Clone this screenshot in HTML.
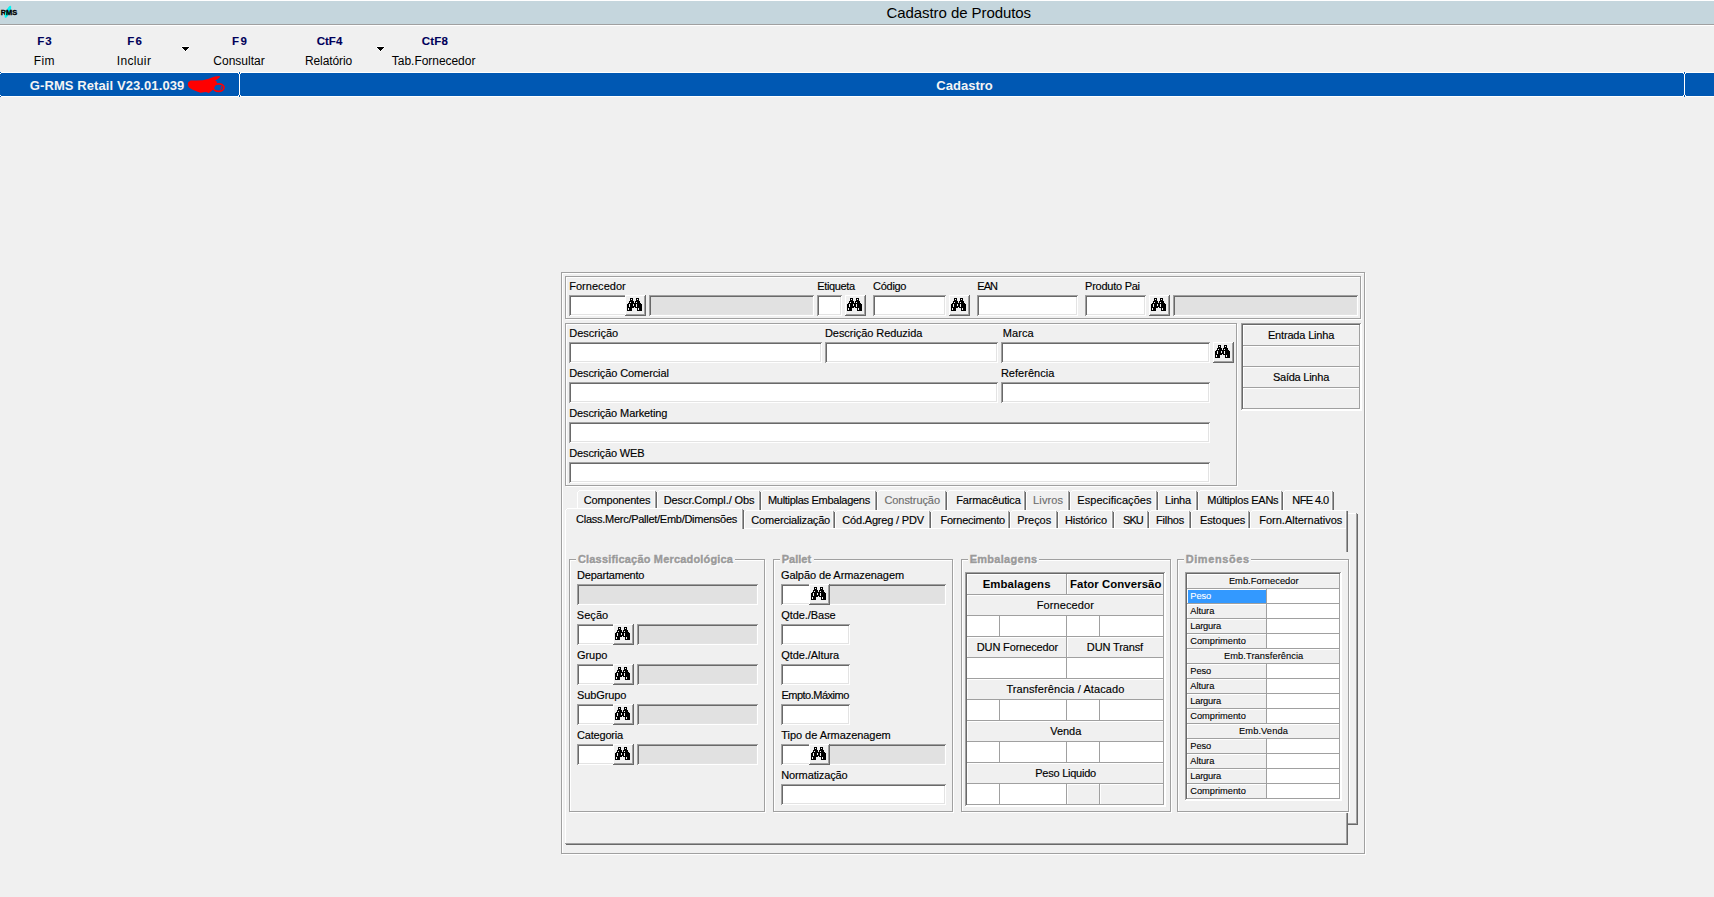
<!DOCTYPE html>
<html lang="pt-BR"><head><meta charset="utf-8"><title>Cadastro de Produtos</title>
<style>
html,body{margin:0;padding:0}
body{width:1714px;height:897px;background:#f0f0f0;position:relative;overflow:hidden;font-family:"Liberation Sans",sans-serif;font-size:11px}
.a{position:absolute;box-sizing:border-box}
.f{background:#fff;box-shadow:inset 0 1px #a0a0a0,inset 1px 0 #a0a0a0,inset -1px 0 #fff,inset 0 -1px #fff,inset 0 2px #696969,inset 2px 0 #696969,inset -2px 0 #e3e3e3,inset 0 -2px #e3e3e3}
.d{background:#e1e1e1}
.b{width:21px;height:21px;background:#f0f0f0;box-shadow:inset -1px 0 #696969,inset 0 -1px #696969,inset 1px 0 #fff,inset 0 1px #fff,inset -2px 0 #a0a0a0,inset 0 -2px #a0a0a0}
.b i{position:absolute;left:2px;top:3px;width:1px;height:1px;box-shadow:3px 0px #000,4px 0px #000,5px 0px #000,9px 0px #000,10px 0px #000,11px 0px #000,3px 1px #000,5px 1px #000,9px 1px #000,11px 1px #000,3px 2px #000,4px 2px #000,5px 2px #000,9px 2px #000,10px 2px #000,11px 2px #000,2px 3px #000,3px 3px #000,4px 3px #000,5px 3px #000,6px 3px #000,8px 3px #000,9px 3px #000,10px 3px #000,11px 3px #000,12px 3px #000,2px 4px #000,4px 4px #000,5px 4px #000,6px 4px #000,8px 4px #000,10px 4px #000,11px 4px #000,12px 4px #000,1px 5px #000,2px 5px #000,3px 5px #000,4px 5px #000,5px 5px #000,6px 5px #000,7px 5px #000,8px 5px #000,9px 5px #000,10px 5px #000,11px 5px #000,12px 5px #000,13px 5px #000,0px 6px #000,1px 6px #000,3px 6px #000,4px 6px #000,5px 6px #000,7px 6px #000,8px 6px #000,10px 6px #000,11px 6px #000,12px 6px #000,13px 6px #000,14px 6px #000,0px 7px #000,1px 7px #000,3px 7px #000,4px 7px #000,5px 7px #000,7px 7px #000,8px 7px #000,10px 7px #000,11px 7px #000,12px 7px #000,13px 7px #000,14px 7px #000,0px 8px #000,1px 8px #000,3px 8px #000,4px 8px #000,5px 8px #000,6px 8px #000,7px 8px #000,8px 8px #000,10px 8px #000,11px 8px #000,12px 8px #000,13px 8px #000,14px 8px #000,0px 9px #000,1px 9px #000,2px 9px #000,3px 9px #000,4px 9px #000,5px 9px #000,6px 9px #000,8px 9px #000,9px 9px #000,10px 9px #000,11px 9px #000,12px 9px #000,13px 9px #000,14px 9px #000,0px 10px #000,2px 10px #000,3px 10px #000,4px 10px #000,10px 10px #000,12px 10px #000,13px 10px #000,14px 10px #000,0px 11px #000,2px 11px #000,3px 11px #000,4px 11px #000,10px 11px #000,12px 11px #000,13px 11px #000,14px 11px #000,0px 12px #000,1px 12px #000,2px 12px #000,3px 12px #000,4px 12px #000,10px 12px #000,11px 12px #000,12px 12px #000,13px 12px #000,14px 12px #000}
.e{border:1px solid #a0a0a0;box-shadow:1px 1px 0 #fff,inset 1px 1px 0 #fff}
svg{position:absolute;left:0;top:0}
text{font-family:"Liberation Sans",sans-serif;font-size:11px;color:#000;fill:currentColor;white-space:pre;stroke:currentColor;stroke-width:.15px}
</style></head>
<body>
<div class="a " style="left:0px;top:0px;width:1714px;height:1px;background:#ffffff"></div>
<div class="a " style="left:0px;top:1px;width:1714px;height:23px;background:#c5d6dd"></div>
<div class="a " style="left:0px;top:24px;width:1714px;height:1px;background:#a0a0a0"></div>
<div class="a " style="left:0px;top:25px;width:1714px;height:1px;background:#ffffff"></div>
<div class="a " style="left:182px;top:46px;width:7px;height:1px;background:#ffffff"></div>
<div class="a " style="left:181px;top:47px;width:1px;height:1px;background:#ffffff"></div>
<div class="a " style="left:189px;top:47px;width:1px;height:1px;background:#ffffff"></div>
<div class="a " style="left:182px;top:47px;width:7px;height:1px;background:#000"></div>
<div class="a " style="left:182px;top:48px;width:1px;height:1px;background:#ffffff"></div>
<div class="a " style="left:188px;top:48px;width:1px;height:1px;background:#ffffff"></div>
<div class="a " style="left:183px;top:48px;width:5px;height:1px;background:#000"></div>
<div class="a " style="left:183px;top:49px;width:1px;height:1px;background:#ffffff"></div>
<div class="a " style="left:187px;top:49px;width:1px;height:1px;background:#ffffff"></div>
<div class="a " style="left:184px;top:49px;width:3px;height:1px;background:#000"></div>
<div class="a " style="left:184px;top:50px;width:1px;height:1px;background:#ffffff"></div>
<div class="a " style="left:186px;top:50px;width:1px;height:1px;background:#ffffff"></div>
<div class="a " style="left:185px;top:50px;width:1px;height:1px;background:#000"></div>
<div class="a " style="left:185px;top:51px;width:1px;height:1px;background:#ffffff"></div>
<div class="a " style="left:377px;top:46px;width:7px;height:1px;background:#ffffff"></div>
<div class="a " style="left:376px;top:47px;width:1px;height:1px;background:#ffffff"></div>
<div class="a " style="left:384px;top:47px;width:1px;height:1px;background:#ffffff"></div>
<div class="a " style="left:377px;top:47px;width:7px;height:1px;background:#000"></div>
<div class="a " style="left:377px;top:48px;width:1px;height:1px;background:#ffffff"></div>
<div class="a " style="left:383px;top:48px;width:1px;height:1px;background:#ffffff"></div>
<div class="a " style="left:378px;top:48px;width:5px;height:1px;background:#000"></div>
<div class="a " style="left:378px;top:49px;width:1px;height:1px;background:#ffffff"></div>
<div class="a " style="left:382px;top:49px;width:1px;height:1px;background:#ffffff"></div>
<div class="a " style="left:379px;top:49px;width:3px;height:1px;background:#000"></div>
<div class="a " style="left:379px;top:50px;width:1px;height:1px;background:#ffffff"></div>
<div class="a " style="left:381px;top:50px;width:1px;height:1px;background:#ffffff"></div>
<div class="a " style="left:380px;top:50px;width:1px;height:1px;background:#000"></div>
<div class="a " style="left:380px;top:51px;width:1px;height:1px;background:#ffffff"></div>
<div class="a " style="left:0px;top:72px;width:1714px;height:1px;background:#ffffff"></div>
<div class="a " style="left:0px;top:73px;width:1714px;height:23px;background:#0058b3"></div>
<div class="a " style="left:0px;top:96px;width:1714px;height:1px;background:#ffffff"></div>
<div class="a " style="left:239px;top:74px;width:1px;height:21px;background:#ffffff"></div>
<div class="a " style="left:238px;top:73px;width:1px;height:1px;background:#ffffff"></div>
<div class="a " style="left:240px;top:73px;width:1px;height:1px;background:#ffffff"></div>
<div class="a " style="left:238px;top:95px;width:1px;height:1px;background:#ffffff"></div>
<div class="a " style="left:240px;top:95px;width:1px;height:1px;background:#ffffff"></div>
<div class="a " style="left:239px;top:72px;width:1px;height:1px;background:#0058b3"></div>
<div class="a " style="left:239px;top:96px;width:1px;height:1px;background:#0058b3"></div>
<div class="a " style="left:1684px;top:74px;width:1px;height:21px;background:#ffffff"></div>
<div class="a " style="left:1683px;top:73px;width:1px;height:1px;background:#ffffff"></div>
<div class="a " style="left:1685px;top:73px;width:1px;height:1px;background:#ffffff"></div>
<div class="a " style="left:1683px;top:95px;width:1px;height:1px;background:#ffffff"></div>
<div class="a " style="left:1685px;top:95px;width:1px;height:1px;background:#ffffff"></div>
<div class="a " style="left:1684px;top:72px;width:1px;height:1px;background:#0058b3"></div>
<div class="a " style="left:1684px;top:96px;width:1px;height:1px;background:#0058b3"></div>
<div class="a " style="left:0px;top:72px;width:1px;height:1px;background:#0058b3"></div>
<div class="a " style="left:0px;top:73px;width:1px;height:1px;background:#ffffff"></div>
<div class="a " style="left:0px;top:95px;width:1px;height:1px;background:#ffffff"></div>
<div class="a " style="left:0px;top:96px;width:1px;height:1px;background:#0058b3"></div>
<div class="a e" style="left:561px;top:272px;width:804px;height:582px;"></div>
<div class="a e" style="left:565px;top:276px;width:796px;height:43px;"></div>
<div class="a e" style="left:565px;top:323px;width:672px;height:163px;"></div>
<div class="a f" style="left:569px;top:295px;width:58px;height:21px;"></div>
<div class="a b" style="left:625px;top:295px"><i></i></div>
<div class="a f d" style="left:649px;top:295px;width:165px;height:21px;"></div>
<div class="a f" style="left:817px;top:295px;width:25px;height:21px;"></div>
<div class="a b" style="left:845px;top:295px"><i></i></div>
<div class="a f" style="left:873px;top:295px;width:73px;height:21px;"></div>
<div class="a b" style="left:949px;top:295px"><i></i></div>
<div class="a f" style="left:977px;top:295px;width:101px;height:21px;"></div>
<div class="a f" style="left:1085px;top:295px;width:61px;height:21px;"></div>
<div class="a b" style="left:1149px;top:295px"><i></i></div>
<div class="a f d" style="left:1173px;top:295px;width:185px;height:21px;"></div>
<div class="a f" style="left:569px;top:342px;width:253px;height:21px;"></div>
<div class="a f" style="left:825px;top:342px;width:173px;height:21px;"></div>
<div class="a f" style="left:1001px;top:342px;width:209px;height:21px;"></div>
<div class="a b" style="left:1213px;top:342px"><i></i></div>
<div class="a f" style="left:569px;top:382px;width:429px;height:21px;"></div>
<div class="a f" style="left:1001px;top:382px;width:209px;height:21px;"></div>
<div class="a f" style="left:569px;top:422px;width:641px;height:21px;"></div>
<div class="a f" style="left:569px;top:462px;width:641px;height:21px;"></div>
<div class="a " style="left:1241px;top:323px;width:1px;height:88px;background:#a0a0a0"></div>
<div class="a " style="left:1242px;top:324px;width:1px;height:86px;background:#696969"></div>
<div class="a " style="left:1241px;top:323px;width:121px;height:1px;background:#a0a0a0"></div>
<div class="a " style="left:1242px;top:324px;width:119px;height:1px;background:#696969"></div>
<div class="a " style="left:1359px;top:325px;width:1px;height:84px;background:#a0a0a0"></div>
<div class="a " style="left:1360px;top:324px;width:2px;height:87px;background:#ffffff"></div>
<div class="a " style="left:1361px;top:323px;width:1px;height:1px;background:#ffffff"></div>
<div class="a " style="left:1243px;top:408px;width:117px;height:1px;background:#a0a0a0"></div>
<div class="a " style="left:1242px;top:409px;width:120px;height:2px;background:#ffffff"></div>
<div class="a " style="left:1241px;top:410px;width:1px;height:1px;background:#ffffff"></div>
<div class="a " style="left:1243px;top:345px;width:116px;height:1px;background:#a0a0a0"></div>
<div class="a " style="left:1243px;top:366px;width:116px;height:1px;background:#a0a0a0"></div>
<div class="a " style="left:1243px;top:387px;width:116px;height:1px;background:#a0a0a0"></div>
<div class="a " style="left:1243px;top:325px;width:116px;height:1px;background:#ffffff"></div>
<div class="a " style="left:1243px;top:325px;width:1px;height:20px;background:#ffffff"></div>
<div class="a " style="left:1243px;top:346px;width:116px;height:1px;background:#ffffff"></div>
<div class="a " style="left:1243px;top:346px;width:1px;height:20px;background:#ffffff"></div>
<div class="a " style="left:1243px;top:367px;width:116px;height:1px;background:#ffffff"></div>
<div class="a " style="left:1243px;top:367px;width:1px;height:20px;background:#ffffff"></div>
<div class="a " style="left:1243px;top:388px;width:116px;height:1px;background:#ffffff"></div>
<div class="a " style="left:1243px;top:388px;width:1px;height:20px;background:#ffffff"></div>
<div class="a " style="left:565px;top:510px;width:1px;height:333px;background:#ffffff"></div>
<div class="a " style="left:565px;top:843px;width:783px;height:1px;background:#a0a0a0"></div>
<div class="a " style="left:566px;top:844px;width:782px;height:1px;background:#696969"></div>
<div class="a " style="left:1346px;top:511px;width:1px;height:333px;background:#a0a0a0"></div>
<div class="a " style="left:1347px;top:511px;width:1px;height:334px;background:#696969"></div>
<div class="a " style="left:744px;top:528px;width:602px;height:1px;background:#ffffff"></div>
<div class="a " style="left:1348px;top:513px;width:8px;height:1px;background:#ffffff"></div>
<div class="a " style="left:1356px;top:513px;width:1px;height:311px;background:#a0a0a0"></div>
<div class="a " style="left:1357px;top:514px;width:1px;height:311px;background:#696969"></div>
<div class="a " style="left:1348px;top:823px;width:9px;height:1px;background:#a0a0a0"></div>
<div class="a " style="left:1348px;top:824px;width:10px;height:1px;background:#696969"></div>
<div class="a " style="left:577px;top:492px;width:1px;height:18px;background:#ffffff"></div>
<div class="a " style="left:578px;top:491px;width:1px;height:1px;background:#ffffff"></div>
<div class="a " style="left:579px;top:490px;width:76px;height:1px;background:#ffffff"></div>
<div class="a " style="left:654px;top:491px;width:1px;height:19px;background:#f9f9f9"></div>
<div class="a " style="left:655px;top:491px;width:1px;height:19px;background:#a0a0a0"></div>
<div class="a " style="left:656px;top:492px;width:1px;height:18px;background:#696969"></div>
<div class="a " style="left:657px;top:492px;width:1px;height:18px;background:#ffffff"></div>
<div class="a " style="left:658px;top:491px;width:1px;height:1px;background:#ffffff"></div>
<div class="a " style="left:659px;top:490px;width:100px;height:1px;background:#ffffff"></div>
<div class="a " style="left:758px;top:491px;width:1px;height:19px;background:#f9f9f9"></div>
<div class="a " style="left:759px;top:491px;width:1px;height:19px;background:#a0a0a0"></div>
<div class="a " style="left:760px;top:492px;width:1px;height:18px;background:#696969"></div>
<div class="a " style="left:761px;top:492px;width:1px;height:18px;background:#ffffff"></div>
<div class="a " style="left:762px;top:491px;width:1px;height:1px;background:#ffffff"></div>
<div class="a " style="left:763px;top:490px;width:112px;height:1px;background:#ffffff"></div>
<div class="a " style="left:874px;top:491px;width:1px;height:19px;background:#f9f9f9"></div>
<div class="a " style="left:875px;top:491px;width:1px;height:19px;background:#a0a0a0"></div>
<div class="a " style="left:876px;top:492px;width:1px;height:18px;background:#696969"></div>
<div class="a " style="left:877px;top:492px;width:1px;height:18px;background:#ffffff"></div>
<div class="a " style="left:878px;top:491px;width:1px;height:1px;background:#ffffff"></div>
<div class="a " style="left:879px;top:490px;width:66px;height:1px;background:#ffffff"></div>
<div class="a " style="left:944px;top:491px;width:1px;height:19px;background:#f9f9f9"></div>
<div class="a " style="left:945px;top:491px;width:1px;height:19px;background:#a0a0a0"></div>
<div class="a " style="left:946px;top:492px;width:1px;height:18px;background:#696969"></div>
<div class="a " style="left:947px;top:492px;width:1px;height:18px;background:#ffffff"></div>
<div class="a " style="left:948px;top:491px;width:1px;height:1px;background:#ffffff"></div>
<div class="a " style="left:949px;top:490px;width:75px;height:1px;background:#ffffff"></div>
<div class="a " style="left:1023px;top:491px;width:1px;height:19px;background:#f9f9f9"></div>
<div class="a " style="left:1024px;top:491px;width:1px;height:19px;background:#a0a0a0"></div>
<div class="a " style="left:1025px;top:492px;width:1px;height:18px;background:#696969"></div>
<div class="a " style="left:1026px;top:492px;width:1px;height:18px;background:#ffffff"></div>
<div class="a " style="left:1027px;top:491px;width:1px;height:1px;background:#ffffff"></div>
<div class="a " style="left:1028px;top:490px;width:40px;height:1px;background:#ffffff"></div>
<div class="a " style="left:1067px;top:491px;width:1px;height:19px;background:#f9f9f9"></div>
<div class="a " style="left:1068px;top:491px;width:1px;height:19px;background:#a0a0a0"></div>
<div class="a " style="left:1069px;top:492px;width:1px;height:18px;background:#696969"></div>
<div class="a " style="left:1070px;top:492px;width:1px;height:18px;background:#ffffff"></div>
<div class="a " style="left:1071px;top:491px;width:1px;height:1px;background:#ffffff"></div>
<div class="a " style="left:1072px;top:490px;width:84px;height:1px;background:#ffffff"></div>
<div class="a " style="left:1155px;top:491px;width:1px;height:19px;background:#f9f9f9"></div>
<div class="a " style="left:1156px;top:491px;width:1px;height:19px;background:#a0a0a0"></div>
<div class="a " style="left:1157px;top:492px;width:1px;height:18px;background:#696969"></div>
<div class="a " style="left:1158px;top:492px;width:1px;height:18px;background:#ffffff"></div>
<div class="a " style="left:1159px;top:491px;width:1px;height:1px;background:#ffffff"></div>
<div class="a " style="left:1160px;top:490px;width:36px;height:1px;background:#ffffff"></div>
<div class="a " style="left:1195px;top:491px;width:1px;height:19px;background:#f9f9f9"></div>
<div class="a " style="left:1196px;top:491px;width:1px;height:19px;background:#a0a0a0"></div>
<div class="a " style="left:1197px;top:492px;width:1px;height:18px;background:#696969"></div>
<div class="a " style="left:1198px;top:492px;width:1px;height:18px;background:#ffffff"></div>
<div class="a " style="left:1199px;top:491px;width:1px;height:1px;background:#ffffff"></div>
<div class="a " style="left:1200px;top:490px;width:81px;height:1px;background:#ffffff"></div>
<div class="a " style="left:1280px;top:491px;width:1px;height:19px;background:#f9f9f9"></div>
<div class="a " style="left:1281px;top:491px;width:1px;height:19px;background:#a0a0a0"></div>
<div class="a " style="left:1282px;top:492px;width:1px;height:18px;background:#696969"></div>
<div class="a " style="left:1283px;top:492px;width:1px;height:18px;background:#ffffff"></div>
<div class="a " style="left:1284px;top:491px;width:1px;height:1px;background:#ffffff"></div>
<div class="a " style="left:1285px;top:490px;width:47px;height:1px;background:#ffffff"></div>
<div class="a " style="left:1331px;top:491px;width:1px;height:19px;background:#f9f9f9"></div>
<div class="a " style="left:1332px;top:491px;width:1px;height:19px;background:#a0a0a0"></div>
<div class="a " style="left:1333px;top:492px;width:1px;height:18px;background:#696969"></div>
<div class="a " style="left:744px;top:512px;width:1px;height:16px;background:#ffffff"></div>
<div class="a " style="left:745px;top:511px;width:1px;height:1px;background:#ffffff"></div>
<div class="a " style="left:746px;top:510px;width:87px;height:1px;background:#ffffff"></div>
<div class="a " style="left:832px;top:511px;width:1px;height:17px;background:#f9f9f9"></div>
<div class="a " style="left:833px;top:511px;width:1px;height:17px;background:#a0a0a0"></div>
<div class="a " style="left:834px;top:512px;width:1px;height:16px;background:#696969"></div>
<div class="a " style="left:835px;top:512px;width:1px;height:16px;background:#ffffff"></div>
<div class="a " style="left:836px;top:511px;width:1px;height:1px;background:#ffffff"></div>
<div class="a " style="left:837px;top:510px;width:92px;height:1px;background:#ffffff"></div>
<div class="a " style="left:928px;top:511px;width:1px;height:17px;background:#f9f9f9"></div>
<div class="a " style="left:929px;top:511px;width:1px;height:17px;background:#a0a0a0"></div>
<div class="a " style="left:930px;top:512px;width:1px;height:16px;background:#696969"></div>
<div class="a " style="left:931px;top:512px;width:1px;height:16px;background:#ffffff"></div>
<div class="a " style="left:932px;top:511px;width:1px;height:1px;background:#ffffff"></div>
<div class="a " style="left:933px;top:510px;width:75px;height:1px;background:#ffffff"></div>
<div class="a " style="left:1007px;top:511px;width:1px;height:17px;background:#f9f9f9"></div>
<div class="a " style="left:1008px;top:511px;width:1px;height:17px;background:#a0a0a0"></div>
<div class="a " style="left:1009px;top:512px;width:1px;height:16px;background:#696969"></div>
<div class="a " style="left:1010px;top:512px;width:1px;height:16px;background:#ffffff"></div>
<div class="a " style="left:1011px;top:511px;width:1px;height:1px;background:#ffffff"></div>
<div class="a " style="left:1012px;top:510px;width:44px;height:1px;background:#ffffff"></div>
<div class="a " style="left:1055px;top:511px;width:1px;height:17px;background:#f9f9f9"></div>
<div class="a " style="left:1056px;top:511px;width:1px;height:17px;background:#a0a0a0"></div>
<div class="a " style="left:1057px;top:512px;width:1px;height:16px;background:#696969"></div>
<div class="a " style="left:1058px;top:512px;width:1px;height:16px;background:#ffffff"></div>
<div class="a " style="left:1059px;top:511px;width:1px;height:1px;background:#ffffff"></div>
<div class="a " style="left:1060px;top:510px;width:52px;height:1px;background:#ffffff"></div>
<div class="a " style="left:1111px;top:511px;width:1px;height:17px;background:#f9f9f9"></div>
<div class="a " style="left:1112px;top:511px;width:1px;height:17px;background:#a0a0a0"></div>
<div class="a " style="left:1113px;top:512px;width:1px;height:16px;background:#696969"></div>
<div class="a " style="left:1114px;top:512px;width:1px;height:16px;background:#ffffff"></div>
<div class="a " style="left:1115px;top:511px;width:1px;height:1px;background:#ffffff"></div>
<div class="a " style="left:1116px;top:510px;width:31px;height:1px;background:#ffffff"></div>
<div class="a " style="left:1146px;top:511px;width:1px;height:17px;background:#f9f9f9"></div>
<div class="a " style="left:1147px;top:511px;width:1px;height:17px;background:#a0a0a0"></div>
<div class="a " style="left:1148px;top:512px;width:1px;height:16px;background:#696969"></div>
<div class="a " style="left:1149px;top:512px;width:1px;height:16px;background:#ffffff"></div>
<div class="a " style="left:1150px;top:511px;width:1px;height:1px;background:#ffffff"></div>
<div class="a " style="left:1151px;top:510px;width:38px;height:1px;background:#ffffff"></div>
<div class="a " style="left:1188px;top:511px;width:1px;height:17px;background:#f9f9f9"></div>
<div class="a " style="left:1189px;top:511px;width:1px;height:17px;background:#a0a0a0"></div>
<div class="a " style="left:1190px;top:512px;width:1px;height:16px;background:#696969"></div>
<div class="a " style="left:1191px;top:512px;width:1px;height:16px;background:#ffffff"></div>
<div class="a " style="left:1192px;top:511px;width:1px;height:1px;background:#ffffff"></div>
<div class="a " style="left:1193px;top:510px;width:55px;height:1px;background:#ffffff"></div>
<div class="a " style="left:1247px;top:511px;width:1px;height:17px;background:#f9f9f9"></div>
<div class="a " style="left:1248px;top:511px;width:1px;height:17px;background:#a0a0a0"></div>
<div class="a " style="left:1249px;top:512px;width:1px;height:16px;background:#696969"></div>
<div class="a " style="left:1250px;top:512px;width:1px;height:16px;background:#ffffff"></div>
<div class="a " style="left:1251px;top:511px;width:1px;height:1px;background:#ffffff"></div>
<div class="a " style="left:1252px;top:510px;width:94px;height:1px;background:#ffffff"></div>
<div class="a " style="left:1345px;top:511px;width:1px;height:17px;background:#f9f9f9"></div>
<div class="a " style="left:1346px;top:511px;width:1px;height:17px;background:#a0a0a0"></div>
<div class="a " style="left:1347px;top:512px;width:1px;height:16px;background:#696969"></div>
<div class="a " style="left:565px;top:508px;width:179px;height:21px;background:#f0f0f0"></div>
<div class="a " style="left:565px;top:510px;width:1px;height:19px;background:#ffffff"></div>
<div class="a " style="left:566px;top:509px;width:1px;height:1px;background:#ffffff"></div>
<div class="a " style="left:567px;top:508px;width:175px;height:1px;background:#ffffff"></div>
<div class="a " style="left:741px;top:509px;width:1px;height:20px;background:#f9f9f9"></div>
<div class="a " style="left:742px;top:509px;width:1px;height:20px;background:#a0a0a0"></div>
<div class="a " style="left:743px;top:510px;width:1px;height:19px;background:#696969"></div>
<div class="a " style="left:565px;top:511px;width:1px;height:332px;background:#ffffff"></div>
<div class="a " style="left:569px;top:552px;width:197px;height:261px;background:#f0f0f0"></div>
<div class="a e" style="left:569px;top:559px;width:196px;height:253px;"></div>
<div class="a " style="left:576px;top:555px;width:159px;height:10px;background:#f0f0f0"></div>
<div class="a " style="left:773px;top:552px;width:181px;height:261px;background:#f0f0f0"></div>
<div class="a e" style="left:773px;top:559px;width:180px;height:253px;"></div>
<div class="a " style="left:780px;top:555px;width:34px;height:10px;background:#f0f0f0"></div>
<div class="a " style="left:961px;top:552px;width:211px;height:261px;background:#f0f0f0"></div>
<div class="a e" style="left:961px;top:559px;width:210px;height:253px;"></div>
<div class="a " style="left:968px;top:555px;width:71px;height:10px;background:#f0f0f0"></div>
<div class="a " style="left:1177px;top:552px;width:173px;height:261px;background:#f0f0f0"></div>
<div class="a e" style="left:1177px;top:559px;width:172px;height:253px;"></div>
<div class="a " style="left:1184px;top:555px;width:67px;height:10px;background:#f0f0f0"></div>
<div class="a f d" style="left:577px;top:584px;width:181px;height:21px;"></div>
<div class="a f" style="left:577px;top:624px;width:38px;height:21px;"></div>
<div class="a b" style="left:613px;top:624px"><i></i></div>
<div class="a f d" style="left:637px;top:624px;width:121px;height:21px;"></div>
<div class="a f" style="left:577px;top:664px;width:38px;height:21px;"></div>
<div class="a b" style="left:613px;top:664px"><i></i></div>
<div class="a f d" style="left:637px;top:664px;width:121px;height:21px;"></div>
<div class="a f" style="left:577px;top:704px;width:38px;height:21px;"></div>
<div class="a b" style="left:613px;top:704px"><i></i></div>
<div class="a f d" style="left:637px;top:704px;width:121px;height:21px;"></div>
<div class="a f" style="left:577px;top:744px;width:38px;height:21px;"></div>
<div class="a b" style="left:613px;top:744px"><i></i></div>
<div class="a f d" style="left:637px;top:744px;width:121px;height:21px;"></div>
<div class="a f" style="left:781px;top:584px;width:30px;height:21px;"></div>
<div class="a f d" style="left:828px;top:584px;width:118px;height:21px;"></div>
<div class="a b" style="left:809px;top:584px"><i></i></div>
<div class="a f" style="left:781px;top:624px;width:69px;height:21px;"></div>
<div class="a f" style="left:781px;top:664px;width:69px;height:21px;"></div>
<div class="a f" style="left:781px;top:704px;width:69px;height:21px;"></div>
<div class="a f" style="left:781px;top:744px;width:30px;height:21px;"></div>
<div class="a f d" style="left:828px;top:744px;width:118px;height:21px;"></div>
<div class="a b" style="left:809px;top:744px"><i></i></div>
<div class="a f" style="left:781px;top:784px;width:165px;height:21px;"></div>
<div class="a " style="left:967px;top:574px;width:196px;height:230px;background:#ffffff"></div>
<div class="a " style="left:965px;top:572px;width:1px;height:235px;background:#a0a0a0"></div>
<div class="a " style="left:966px;top:573px;width:1px;height:233px;background:#696969"></div>
<div class="a " style="left:965px;top:572px;width:201px;height:1px;background:#a0a0a0"></div>
<div class="a " style="left:966px;top:573px;width:199px;height:1px;background:#696969"></div>
<div class="a " style="left:1163px;top:574px;width:1px;height:231px;background:#a0a0a0"></div>
<div class="a " style="left:1164px;top:573px;width:2px;height:234px;background:#ffffff"></div>
<div class="a " style="left:1165px;top:572px;width:1px;height:1px;background:#ffffff"></div>
<div class="a " style="left:967px;top:804px;width:197px;height:1px;background:#a0a0a0"></div>
<div class="a " style="left:966px;top:805px;width:200px;height:2px;background:#ffffff"></div>
<div class="a " style="left:965px;top:806px;width:1px;height:1px;background:#ffffff"></div>
<div class="a " style="left:967px;top:574px;width:196px;height:20px;background:#f0f0f0"></div>
<div class="a " style="left:967px;top:574px;width:99px;height:1px;background:#ffffff"></div>
<div class="a " style="left:967px;top:574px;width:1px;height:20px;background:#ffffff"></div>
<div class="a " style="left:1067px;top:574px;width:96px;height:1px;background:#ffffff"></div>
<div class="a " style="left:1067px;top:574px;width:1px;height:20px;background:#ffffff"></div>
<div class="a " style="left:1066px;top:574px;width:1px;height:20px;background:#a0a0a0"></div>
<div class="a " style="left:967px;top:594px;width:196px;height:1px;background:#a0a0a0"></div>
<div class="a " style="left:967px;top:595px;width:196px;height:20px;background:#f0f0f0"></div>
<div class="a " style="left:967px;top:595px;width:196px;height:1px;background:#ffffff"></div>
<div class="a " style="left:967px;top:595px;width:1px;height:20px;background:#ffffff"></div>
<div class="a " style="left:967px;top:615px;width:196px;height:1px;background:#a0a0a0"></div>
<div class="a " style="left:999px;top:616px;width:1px;height:20px;background:#a0a0a0"></div>
<div class="a " style="left:1066px;top:616px;width:1px;height:20px;background:#a0a0a0"></div>
<div class="a " style="left:1099px;top:616px;width:1px;height:20px;background:#a0a0a0"></div>
<div class="a " style="left:967px;top:636px;width:196px;height:1px;background:#a0a0a0"></div>
<div class="a " style="left:967px;top:637px;width:196px;height:20px;background:#f0f0f0"></div>
<div class="a " style="left:967px;top:637px;width:99px;height:1px;background:#ffffff"></div>
<div class="a " style="left:967px;top:637px;width:1px;height:20px;background:#ffffff"></div>
<div class="a " style="left:1067px;top:637px;width:96px;height:1px;background:#ffffff"></div>
<div class="a " style="left:1067px;top:637px;width:1px;height:20px;background:#ffffff"></div>
<div class="a " style="left:1066px;top:637px;width:1px;height:20px;background:#a0a0a0"></div>
<div class="a " style="left:967px;top:657px;width:196px;height:1px;background:#a0a0a0"></div>
<div class="a " style="left:1066px;top:658px;width:1px;height:20px;background:#a0a0a0"></div>
<div class="a " style="left:967px;top:678px;width:196px;height:1px;background:#a0a0a0"></div>
<div class="a " style="left:967px;top:679px;width:196px;height:20px;background:#f0f0f0"></div>
<div class="a " style="left:967px;top:679px;width:196px;height:1px;background:#ffffff"></div>
<div class="a " style="left:967px;top:679px;width:1px;height:20px;background:#ffffff"></div>
<div class="a " style="left:967px;top:699px;width:196px;height:1px;background:#a0a0a0"></div>
<div class="a " style="left:999px;top:700px;width:1px;height:20px;background:#a0a0a0"></div>
<div class="a " style="left:1066px;top:700px;width:1px;height:20px;background:#a0a0a0"></div>
<div class="a " style="left:1099px;top:700px;width:1px;height:20px;background:#a0a0a0"></div>
<div class="a " style="left:967px;top:720px;width:196px;height:1px;background:#a0a0a0"></div>
<div class="a " style="left:967px;top:721px;width:196px;height:20px;background:#f0f0f0"></div>
<div class="a " style="left:967px;top:721px;width:196px;height:1px;background:#ffffff"></div>
<div class="a " style="left:967px;top:721px;width:1px;height:20px;background:#ffffff"></div>
<div class="a " style="left:967px;top:741px;width:196px;height:1px;background:#a0a0a0"></div>
<div class="a " style="left:999px;top:742px;width:1px;height:20px;background:#a0a0a0"></div>
<div class="a " style="left:1066px;top:742px;width:1px;height:20px;background:#a0a0a0"></div>
<div class="a " style="left:1099px;top:742px;width:1px;height:20px;background:#a0a0a0"></div>
<div class="a " style="left:967px;top:762px;width:196px;height:1px;background:#a0a0a0"></div>
<div class="a " style="left:967px;top:763px;width:196px;height:20px;background:#f0f0f0"></div>
<div class="a " style="left:967px;top:763px;width:196px;height:1px;background:#ffffff"></div>
<div class="a " style="left:967px;top:763px;width:1px;height:20px;background:#ffffff"></div>
<div class="a " style="left:967px;top:783px;width:196px;height:1px;background:#a0a0a0"></div>
<div class="a " style="left:1067px;top:784px;width:96px;height:20px;background:#f0f0f0"></div>
<div class="a " style="left:1067px;top:784px;width:32px;height:1px;background:#ffffff"></div>
<div class="a " style="left:1067px;top:784px;width:1px;height:20px;background:#ffffff"></div>
<div class="a " style="left:1100px;top:784px;width:63px;height:1px;background:#ffffff"></div>
<div class="a " style="left:1100px;top:784px;width:1px;height:20px;background:#ffffff"></div>
<div class="a " style="left:999px;top:784px;width:1px;height:20px;background:#a0a0a0"></div>
<div class="a " style="left:1066px;top:784px;width:1px;height:20px;background:#a0a0a0"></div>
<div class="a " style="left:1099px;top:784px;width:1px;height:20px;background:#a0a0a0"></div>
<div class="a " style="left:1187px;top:574px;width:152px;height:224px;background:#ffffff"></div>
<div class="a " style="left:1185px;top:572px;width:1px;height:229px;background:#a0a0a0"></div>
<div class="a " style="left:1186px;top:573px;width:1px;height:227px;background:#696969"></div>
<div class="a " style="left:1185px;top:572px;width:157px;height:1px;background:#a0a0a0"></div>
<div class="a " style="left:1186px;top:573px;width:155px;height:1px;background:#696969"></div>
<div class="a " style="left:1339px;top:574px;width:1px;height:225px;background:#a0a0a0"></div>
<div class="a " style="left:1340px;top:573px;width:2px;height:228px;background:#ffffff"></div>
<div class="a " style="left:1341px;top:572px;width:1px;height:1px;background:#ffffff"></div>
<div class="a " style="left:1187px;top:798px;width:153px;height:1px;background:#a0a0a0"></div>
<div class="a " style="left:1186px;top:799px;width:156px;height:2px;background:#ffffff"></div>
<div class="a " style="left:1185px;top:800px;width:1px;height:1px;background:#ffffff"></div>
<div class="a " style="left:1187px;top:574px;width:152px;height:14px;background:#f0f0f0"></div>
<div class="a " style="left:1187px;top:574px;width:152px;height:1px;background:#ffffff"></div>
<div class="a " style="left:1187px;top:574px;width:1px;height:14px;background:#ffffff"></div>
<div class="a " style="left:1187px;top:588px;width:152px;height:1px;background:#a0a0a0"></div>
<div class="a " style="left:1187px;top:589px;width:79px;height:14px;background:#ffffff"></div>
<div class="a " style="left:1188px;top:590px;width:78px;height:13px;background:#3399ff"></div>
<div class="a " style="left:1266px;top:589px;width:1px;height:14px;background:#a0a0a0"></div>
<div class="a " style="left:1187px;top:603px;width:152px;height:1px;background:#a0a0a0"></div>
<div class="a " style="left:1187px;top:604px;width:79px;height:14px;background:#f0f0f0"></div>
<div class="a " style="left:1187px;top:604px;width:79px;height:1px;background:#ffffff"></div>
<div class="a " style="left:1187px;top:604px;width:1px;height:14px;background:#ffffff"></div>
<div class="a " style="left:1266px;top:604px;width:1px;height:14px;background:#a0a0a0"></div>
<div class="a " style="left:1187px;top:618px;width:152px;height:1px;background:#a0a0a0"></div>
<div class="a " style="left:1187px;top:619px;width:79px;height:14px;background:#f0f0f0"></div>
<div class="a " style="left:1187px;top:619px;width:79px;height:1px;background:#ffffff"></div>
<div class="a " style="left:1187px;top:619px;width:1px;height:14px;background:#ffffff"></div>
<div class="a " style="left:1266px;top:619px;width:1px;height:14px;background:#a0a0a0"></div>
<div class="a " style="left:1187px;top:633px;width:152px;height:1px;background:#a0a0a0"></div>
<div class="a " style="left:1187px;top:634px;width:79px;height:14px;background:#f0f0f0"></div>
<div class="a " style="left:1187px;top:634px;width:79px;height:1px;background:#ffffff"></div>
<div class="a " style="left:1187px;top:634px;width:1px;height:14px;background:#ffffff"></div>
<div class="a " style="left:1266px;top:634px;width:1px;height:14px;background:#a0a0a0"></div>
<div class="a " style="left:1187px;top:648px;width:152px;height:1px;background:#a0a0a0"></div>
<div class="a " style="left:1187px;top:649px;width:152px;height:14px;background:#f0f0f0"></div>
<div class="a " style="left:1187px;top:649px;width:152px;height:1px;background:#ffffff"></div>
<div class="a " style="left:1187px;top:649px;width:1px;height:14px;background:#ffffff"></div>
<div class="a " style="left:1187px;top:663px;width:152px;height:1px;background:#a0a0a0"></div>
<div class="a " style="left:1187px;top:664px;width:79px;height:14px;background:#f0f0f0"></div>
<div class="a " style="left:1187px;top:664px;width:79px;height:1px;background:#ffffff"></div>
<div class="a " style="left:1187px;top:664px;width:1px;height:14px;background:#ffffff"></div>
<div class="a " style="left:1266px;top:664px;width:1px;height:14px;background:#a0a0a0"></div>
<div class="a " style="left:1187px;top:678px;width:152px;height:1px;background:#a0a0a0"></div>
<div class="a " style="left:1187px;top:679px;width:79px;height:14px;background:#f0f0f0"></div>
<div class="a " style="left:1187px;top:679px;width:79px;height:1px;background:#ffffff"></div>
<div class="a " style="left:1187px;top:679px;width:1px;height:14px;background:#ffffff"></div>
<div class="a " style="left:1266px;top:679px;width:1px;height:14px;background:#a0a0a0"></div>
<div class="a " style="left:1187px;top:693px;width:152px;height:1px;background:#a0a0a0"></div>
<div class="a " style="left:1187px;top:694px;width:79px;height:14px;background:#f0f0f0"></div>
<div class="a " style="left:1187px;top:694px;width:79px;height:1px;background:#ffffff"></div>
<div class="a " style="left:1187px;top:694px;width:1px;height:14px;background:#ffffff"></div>
<div class="a " style="left:1266px;top:694px;width:1px;height:14px;background:#a0a0a0"></div>
<div class="a " style="left:1187px;top:708px;width:152px;height:1px;background:#a0a0a0"></div>
<div class="a " style="left:1187px;top:709px;width:79px;height:14px;background:#f0f0f0"></div>
<div class="a " style="left:1187px;top:709px;width:79px;height:1px;background:#ffffff"></div>
<div class="a " style="left:1187px;top:709px;width:1px;height:14px;background:#ffffff"></div>
<div class="a " style="left:1266px;top:709px;width:1px;height:14px;background:#a0a0a0"></div>
<div class="a " style="left:1187px;top:723px;width:152px;height:1px;background:#a0a0a0"></div>
<div class="a " style="left:1187px;top:724px;width:152px;height:14px;background:#f0f0f0"></div>
<div class="a " style="left:1187px;top:724px;width:152px;height:1px;background:#ffffff"></div>
<div class="a " style="left:1187px;top:724px;width:1px;height:14px;background:#ffffff"></div>
<div class="a " style="left:1187px;top:738px;width:152px;height:1px;background:#a0a0a0"></div>
<div class="a " style="left:1187px;top:739px;width:79px;height:14px;background:#f0f0f0"></div>
<div class="a " style="left:1187px;top:739px;width:79px;height:1px;background:#ffffff"></div>
<div class="a " style="left:1187px;top:739px;width:1px;height:14px;background:#ffffff"></div>
<div class="a " style="left:1266px;top:739px;width:1px;height:14px;background:#a0a0a0"></div>
<div class="a " style="left:1187px;top:753px;width:152px;height:1px;background:#a0a0a0"></div>
<div class="a " style="left:1187px;top:754px;width:79px;height:14px;background:#f0f0f0"></div>
<div class="a " style="left:1187px;top:754px;width:79px;height:1px;background:#ffffff"></div>
<div class="a " style="left:1187px;top:754px;width:1px;height:14px;background:#ffffff"></div>
<div class="a " style="left:1266px;top:754px;width:1px;height:14px;background:#a0a0a0"></div>
<div class="a " style="left:1187px;top:768px;width:152px;height:1px;background:#a0a0a0"></div>
<div class="a " style="left:1187px;top:769px;width:79px;height:14px;background:#f0f0f0"></div>
<div class="a " style="left:1187px;top:769px;width:79px;height:1px;background:#ffffff"></div>
<div class="a " style="left:1187px;top:769px;width:1px;height:14px;background:#ffffff"></div>
<div class="a " style="left:1266px;top:769px;width:1px;height:14px;background:#a0a0a0"></div>
<div class="a " style="left:1187px;top:783px;width:152px;height:1px;background:#a0a0a0"></div>
<div class="a " style="left:1187px;top:784px;width:79px;height:14px;background:#f0f0f0"></div>
<div class="a " style="left:1187px;top:784px;width:79px;height:1px;background:#ffffff"></div>
<div class="a " style="left:1187px;top:784px;width:1px;height:14px;background:#ffffff"></div>
<div class="a " style="left:1266px;top:784px;width:1px;height:14px;background:#a0a0a0"></div>
<svg width="1714" height="897" viewBox="0 0 1714 897">

<text x="0.8" y="15" style="font-size:7px;font-weight:bold;stroke-width:.35px" textLength="5.3" lengthAdjust="spacingAndGlyphs">R</text>
<ellipse cx="7.9" cy="11.8" rx="2.0" ry="6.6" transform="rotate(25 7.9 11.8)" fill="#00f4f4"/>
<text x="6.1" y="15" style="font-size:7px;font-weight:bold;stroke-width:.35px" textLength="11.1" lengthAdjust="spacingAndGlyphs">MS</text>
<path d="M188.2 82.2 L190.6 80.6 L196.3 80.4 L202.9 80.2 L208.6 78.8 L214.7 76.5 L219.2 75.9 L220.2 77.1 L218 78.8 L215.1 80.8 L217 81.8 L216.7 83.5 L215.1 85.5 L213.5 89.2 L210.2 92 L208.6 93.1 L206.1 92 L200.4 92.7 L196.3 91.2 L192.2 89.6 L189 87.6 L187.8 85.1 Z" fill="#ff0000"/>
<ellipse cx="218.6" cy="87.6" rx="5.4" ry="3.8" fill="none" stroke="#ff0000" stroke-width="1.7"/>
<path d="M221.6 86.2 Q222 88.3 220.5 89.6" fill="none" stroke="#ff0000" stroke-width="1"/>

<text x="886.54" y="18" style="font-size:15px;color:#000;stroke-width:0px;letter-spacing:-0.074px">Cadastro de Produtos</text>
<text x="37.29" y="45" style="font-size:11.5px;font-weight:bold;color:#00005a;stroke-width:0.1px;letter-spacing:1.060px">F3</text>
<text x="33.80" y="65" style="font-size:12px;stroke-width:0px;letter-spacing:0.366px">Fim</text>
<text x="127.33" y="45" style="font-size:11.5px;font-weight:bold;color:#00005a;stroke-width:0.1px;letter-spacing:1.162px">F6</text>
<text x="116.80" y="65" style="font-size:12px;stroke-width:0px;letter-spacing:0.346px">Incluir</text>
<text x="232.06" y="45" style="font-size:11.5px;font-weight:bold;color:#00005a;stroke-width:0.1px;letter-spacing:1.545px">F9</text>
<text x="213.34" y="65" style="font-size:12px;stroke-width:0px">Consultar</text>
<text x="316.68" y="45" style="font-size:11.5px;font-weight:bold;color:#00005a;stroke-width:0.1px;letter-spacing:0.022px">CtF4</text>
<text x="304.96" y="65" style="font-size:12px;stroke-width:0px;letter-spacing:-0.091px">Relatório</text>
<text x="421.85" y="45" style="font-size:11.5px;font-weight:bold;color:#00005a;stroke-width:0.1px;letter-spacing:0.133px">CtF8</text>
<text x="391.87" y="65" style="font-size:12px;stroke-width:0px;letter-spacing:-0.041px">Tab.Fornecedor</text>
<text x="29.87" y="90" style="font-size:13px;font-weight:bold;color:#f4f4f4;stroke-width:0px;letter-spacing:0.088px">G-RMS Retail V23.01.039</text>
<text x="936.32" y="90" style="font-size:13px;font-weight:bold;color:#f4f4f4;stroke-width:0px;letter-spacing:0.019px">Cadastro</text>
<text x="569.18" y="290" style="letter-spacing:0.040px">Fornecedor</text>
<text x="817.23" y="290" style="letter-spacing:-0.341px">Etiqueta</text>
<text x="873.11" y="290" style="letter-spacing:-0.296px">Código</text>
<text x="977.31" y="290" style="letter-spacing:-0.981px">EAN</text>
<text x="1085.06" y="290" style="letter-spacing:-0.248px">Produto Pai</text>
<text x="569.21" y="337" style="letter-spacing:0.008px">Descrição</text>
<text x="824.97" y="337" style="letter-spacing:-0.062px">Descrição Reduzida</text>
<text x="1002.70" y="337" style="letter-spacing:0.085px">Marca</text>
<text x="569.18" y="377" style="letter-spacing:-0.095px">Descrição Comercial</text>
<text x="1000.92" y="377" style="letter-spacing:0.022px">Referência</text>
<text x="569.24" y="417" style="letter-spacing:-0.112px">Descrição Marketing</text>
<text x="569.24" y="457" style="letter-spacing:-0.139px">Descrição WEB</text>
<text x="1267.95" y="339" style="letter-spacing:-0.174px">Entrada Linha</text>
<text x="1272.91" y="381" style="letter-spacing:-0.237px">Saída Linha</text>
<text x="583.82" y="504" style="letter-spacing:-0.188px">Componentes</text>
<text x="663.75" y="504" style="letter-spacing:-0.095px">Descr.Compl./ Obs</text>
<text x="767.95" y="504" style="letter-spacing:-0.285px">Multiplas Embalagens</text>
<text x="884.43" y="504" style="color:#6d6d6d;letter-spacing:-0.072px">Construção</text>
<text x="956.20" y="504" style="letter-spacing:-0.185px">Farmacêutica</text>
<text x="1033.08" y="504" style="color:#6d6d6d;letter-spacing:0.137px">Livros</text>
<text x="1077.23" y="504" style="letter-spacing:0.072px">Especificações</text>
<text x="1164.97" y="504" style="letter-spacing:-0.176px">Linha</text>
<text x="1207.24" y="504" style="letter-spacing:-0.247px">Múltiplos EANs</text>
<text x="1292.28" y="504" style="letter-spacing:-0.565px">NFE 4.0</text>
<text x="751.29" y="524" style="letter-spacing:-0.168px">Comercialização</text>
<text x="842.37" y="524" style="letter-spacing:-0.197px">Cód.Agreg / PDV</text>
<text x="940.43" y="524" style="letter-spacing:-0.223px">Fornecimento</text>
<text x="1017.24" y="524" style="letter-spacing:-0.066px">Preços</text>
<text x="1064.92" y="524" style="letter-spacing:-0.078px">Histórico</text>
<text x="1122.94" y="524" style="letter-spacing:-0.886px">SKU</text>
<text x="1155.97" y="524" style="letter-spacing:-0.209px">Filhos</text>
<text x="1199.90" y="524" style="letter-spacing:-0.068px">Estoques</text>
<text x="1259.22" y="524">Forn.Alternativos</text>
<text x="576.10" y="523" style="letter-spacing:-0.272px">Class.Merc/Pallet/Emb/Dimensões</text>
<text x="578.98" y="564" style="font-weight:bold;color:#fff;stroke-width:0.4px;letter-spacing:0.178px">Classificação Mercadológica</text>
<text x="577.98" y="563" style="font-weight:bold;color:#9a9a9a;stroke-width:0.4px;letter-spacing:0.178px">Classificação Mercadológica</text>
<text x="782.71" y="564" style="font-weight:bold;color:#fff;stroke-width:0.4px;letter-spacing:0.021px">Pallet</text>
<text x="781.71" y="563" style="font-weight:bold;color:#9a9a9a;stroke-width:0.4px;letter-spacing:0.021px">Pallet</text>
<text x="970.64" y="564" style="font-weight:bold;color:#fff;stroke-width:0.4px;letter-spacing:0.297px">Embalagens</text>
<text x="969.64" y="563" style="font-weight:bold;color:#9a9a9a;stroke-width:0.4px;letter-spacing:0.297px">Embalagens</text>
<text x="1186.68" y="564" style="font-weight:bold;color:#fff;stroke-width:0.4px;letter-spacing:0.579px">Dimensões</text>
<text x="1185.68" y="563" style="font-weight:bold;color:#9a9a9a;stroke-width:0.4px;letter-spacing:0.579px">Dimensões</text>
<text x="576.97" y="579" style="letter-spacing:-0.200px">Departamento</text>
<text x="576.84" y="619" style="letter-spacing:0.031px">Seção</text>
<text x="577.00" y="659" style="letter-spacing:-0.050px">Grupo</text>
<text x="577.01" y="699" style="letter-spacing:-0.122px">SubGrupo</text>
<text x="577.12" y="739" style="letter-spacing:-0.208px">Categoria</text>
<text x="780.98" y="579" style="letter-spacing:-0.081px">Galpão de Armazenagem</text>
<text x="781.29" y="619" style="letter-spacing:-0.070px">Qtde./Base</text>
<text x="781.30" y="659" style="letter-spacing:-0.069px">Qtde./Altura</text>
<text x="781.38" y="699" style="letter-spacing:-0.497px">Empto.Máximo</text>
<text x="781.35" y="739" style="letter-spacing:-0.055px">Tipo de Armazenagem</text>
<text x="781.27" y="779" style="letter-spacing:-0.129px">Normatização</text>
<text x="982.63" y="588" style="font-size:11.4px;font-weight:bold;stroke-width:0px;letter-spacing:0.082px">Embalagens</text>
<text x="1069.99" y="588" style="font-size:11.4px;font-weight:bold;stroke-width:0px;letter-spacing:0.065px">Fator Conversão</text>
<text x="1036.79" y="609" style="letter-spacing:0.085px">Fornecedor</text>
<text x="976.78" y="651" style="letter-spacing:-0.138px">DUN Fornecedor</text>
<text x="1086.86" y="651" style="letter-spacing:-0.127px">DUN Transf</text>
<text x="1006.40" y="693" style="letter-spacing:0.100px">Transferência / Atacado</text>
<text x="1050.20" y="735" style="letter-spacing:-0.023px">Venda</text>
<text x="1035.25" y="777" style="letter-spacing:-0.244px">Peso Liquido</text>
<text x="1228.89" y="584" style="font-size:9.3px;stroke-width:0.1px;letter-spacing:0.040px">Emb.Fornecedor</text>
<text x="1190.25" y="599" style="font-size:9.3px;color:#fff;stroke-width:0.1px;letter-spacing:-0.063px">Peso</text>
<text x="1190.37" y="614" style="font-size:9.3px;stroke-width:0.1px;letter-spacing:-0.066px">Altura</text>
<text x="1190.14" y="629" style="font-size:9.3px;stroke-width:0.1px;letter-spacing:-0.164px">Largura</text>
<text x="1190.19" y="644" style="font-size:9.3px;stroke-width:0.1px;letter-spacing:-0.013px">Comprimento</text>
<text x="1224.04" y="659" style="font-size:9.3px;stroke-width:0.1px;letter-spacing:0.066px">Emb.Transferência</text>
<text x="1190.25" y="674" style="font-size:9.3px;stroke-width:0.1px;letter-spacing:-0.063px">Peso</text>
<text x="1190.37" y="689" style="font-size:9.3px;stroke-width:0.1px;letter-spacing:-0.066px">Altura</text>
<text x="1190.14" y="704" style="font-size:9.3px;stroke-width:0.1px;letter-spacing:-0.164px">Largura</text>
<text x="1190.19" y="719" style="font-size:9.3px;stroke-width:0.1px;letter-spacing:-0.013px">Comprimento</text>
<text x="1238.99" y="734" style="font-size:9.3px;stroke-width:0.1px;letter-spacing:0.098px">Emb.Venda</text>
<text x="1190.25" y="749" style="font-size:9.3px;stroke-width:0.1px;letter-spacing:-0.063px">Peso</text>
<text x="1190.37" y="764" style="font-size:9.3px;stroke-width:0.1px;letter-spacing:-0.066px">Altura</text>
<text x="1190.14" y="779" style="font-size:9.3px;stroke-width:0.1px;letter-spacing:-0.164px">Largura</text>
<text x="1190.19" y="794" style="font-size:9.3px;stroke-width:0.1px;letter-spacing:-0.013px">Comprimento</text>
</svg>
</body></html>
